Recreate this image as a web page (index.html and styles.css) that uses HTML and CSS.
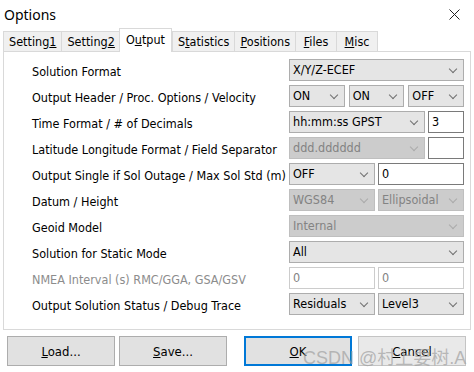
FILE: index.html
```html
<!DOCTYPE html>
<html lang="en">
<head>
    <meta charset="UTF-8">
    <title>Options</title>
    <link rel="stylesheet" href="styles.css">
</head>
<body>
    <div class="window">
        <div class="titlebar">
            <span class="title">Options</span>
            <svg class="close" width="11" height="11" viewBox="0 0 11 11"><path d="M0.5 0.5 L10.5 10.5 M10.5 0.5 L0.5 10.5" stroke="#222" stroke-width="1" fill="none"/></svg>
        </div>

        <div class="tabs">
            <div class="tab">Setting<u>1</u></div>
            <div class="tab">Setting<u>2</u></div>
            <div class="tab active">O<u>u</u>tput</div>
            <div class="tab">S<u>t</u>atistics</div>
            <div class="tab"><u>P</u>ositions</div>
            <div class="tab"><u>F</u>iles</div>
            <div class="tab"><u>M</u>isc</div>
        </div>

        <div class="panel">
            <div class="row">
                <span class="label">Solution Format</span>
                <div class="controls">
                    <div class="combo">X/Y/Z-ECEF</div>
                </div>
            </div>
            <div class="row">
                <span class="label">Output Header / Proc. Options / Velocity</span>
                <div class="controls three">
                    <div class="combo">ON</div>
                    <div class="combo">ON</div>
                    <div class="combo">OFF</div>
                </div>
            </div>
            <div class="row">
                <span class="label">Time Format / # of Decimals</span>
                <div class="controls wide-narrow">
                    <div class="combo">hh:mm:ss GPST</div>
                    <div class="edit">3</div>
                </div>
            </div>
            <div class="row">
                <span class="label">Latitude Longitude Format / Field Separator</span>
                <div class="controls wide-narrow">
                    <div class="combo disabled">ddd.dddddd</div>
                    <div class="edit"></div>
                </div>
            </div>
            <div class="row">
                <span class="label">Output Single if Sol Outage / Max Sol Std (m)</span>
                <div class="controls two">
                    <div class="combo">OFF</div>
                    <div class="edit">0</div>
                </div>
            </div>
            <div class="row">
                <span class="label">Datum / Height</span>
                <div class="controls two">
                    <div class="combo disabled">WGS84</div>
                    <div class="combo disabled">Ellipsoidal</div>
                </div>
            </div>
            <div class="row">
                <span class="label">Geoid Model</span>
                <div class="controls">
                    <div class="combo disabled">Internal</div>
                </div>
            </div>
            <div class="row">
                <span class="label">Solution for Static Mode</span>
                <div class="controls">
                    <div class="combo">All</div>
                </div>
            </div>
            <div class="row">
                <span class="label off">NMEA Interval (s) RMC/GGA, GSA/GSV</span>
                <div class="controls two">
                    <div class="edit disabled">0</div>
                    <div class="edit disabled">0</div>
                </div>
            </div>
            <div class="row">
                <span class="label">Output Solution Status / Debug Trace</span>
                <div class="controls two">
                    <div class="combo">Residuals</div>
                    <div class="combo">Level3</div>
                </div>
            </div>
        </div>

        <div class="buttons">
            <div class="left">
                <button><u>L</u>oad...</button>
                <button><u>S</u>ave...</button>
            </div>
            <div class="right">
                <button class="default"><u>O</u>K</button>
                <button class="cancel"><u>C</u>ancel</button>
            </div>
        </div>

        <div class="watermark">CSDN @村上要树.A</div>
    </div>
</body>
</html>
```

FILE: styles.css
```css
body {
    margin: 0;
    background: #fff;
    font-family: "DejaVu Sans Condensed", "Liberation Sans", sans-serif;
    font-size: 12.5px;
    color: #000;
}
.window {
    position: relative;
    width: 474px;
    height: 372px;
    overflow: hidden;
    background: #fff;
}
.titlebar {
    height: 29px;
    display: flex;
    align-items: center;
    justify-content: space-between;
    padding: 0 14px 0 4px;
}
.title {
    font-family: "Noto Sans", sans-serif;
    font-size: 14px;
}
.tabs {
    display: flex;
    align-items: flex-end;
    height: 22px;
    padding-left: 3px;
    position: relative;
    z-index: 1;
}
.tab {
    height: 19px;
    line-height: 19px;
    min-width: 30px;
    padding: 0 5px;
    text-align: center;
    background: #f0f0f0;
    border: 1px solid #d9d9d9;
    border-bottom: none;
    margin-right: -1px;
}
.tab.active {
    height: 23px;
    line-height: 21px;
    background: #fff;
    margin: 0 0 -1px -1px;
    padding: 0 6px;
    position: relative;
}
.panel {
    margin: 0 3px;
    height: 270px;
    border: 1px solid #d9d9d9;
    padding-top: 7px;
    display: flex;
    flex-direction: column;
    gap: 4px;
}
.row {
    display: flex;
    align-items: center;
    justify-content: space-between;
    height: 22px;
    padding: 0 6px 0 28px;
}
.label {
    padding-top: 3px;
    white-space: nowrap;
}
.label.off {
    color: #8c8c8c;
}
.controls {
    width: 175px;
    height: 22px;
    display: grid;
    grid-template-columns: 1fr;
    gap: 3px;
}
.controls.two { grid-template-columns: 1fr 1fr; }
.controls.three { grid-template-columns: 1fr 1fr 1fr; gap: 4px; }
.controls.wide-narrow { grid-template-columns: 1fr 36px; }
.combo, .edit {
    box-sizing: border-box;
    height: 22px;
    line-height: 20px;
    padding: 0 3px;
    font-size: 12.5px;
    white-space: nowrap;
    overflow: hidden;
}
.combo {
    position: relative;
    background: #e5e5e5;
    border: 1px solid #adadad;
}
.combo::after {
    content: "";
    position: absolute;
    right: 7px;
    top: 6px;
    width: 5px;
    height: 5px;
    border-right: 1px solid #707070;
    border-bottom: 1px solid #707070;
    transform: rotate(45deg);
}
.combo.disabled {
    background: #cccccc;
    border-color: #bfbfbf;
    color: #838383;
}
.combo.disabled::after {
    border-color: #aaaaaa;
}
.edit {
    background: #fff;
    border: 1px solid #7a7a7a;
}
.edit.disabled {
    border-color: #cccccc;
    color: #838383;
}
.buttons {
    display: flex;
    justify-content: space-between;
    padding: 6px 8px 0 7px;
}
.left, .right {
    display: flex;
    gap: 4px;
}
.right {
    gap: 6px;
}
button {
    width: 108px;
    height: 30px;
    font-family: "DejaVu Sans Condensed", "Liberation Sans", sans-serif;
    font-size: 13px;
    color: #000;
    background: #e1e1e1;
    border: 1px solid #adadad;
    padding: 0;
}
button.default {
    border: 2px solid #0078d7;
}
button.cancel {
    background: #e9e9e9;
    border-color: #c4c4c4;
}
.watermark {
    position: absolute;
    left: 303px;
    top: 343px;
    font-family: "Liberation Sans", "Noto Sans CJK SC", sans-serif;
    font-size: 18px;
    color: rgba(160, 160, 160, 0.7);
}
```
